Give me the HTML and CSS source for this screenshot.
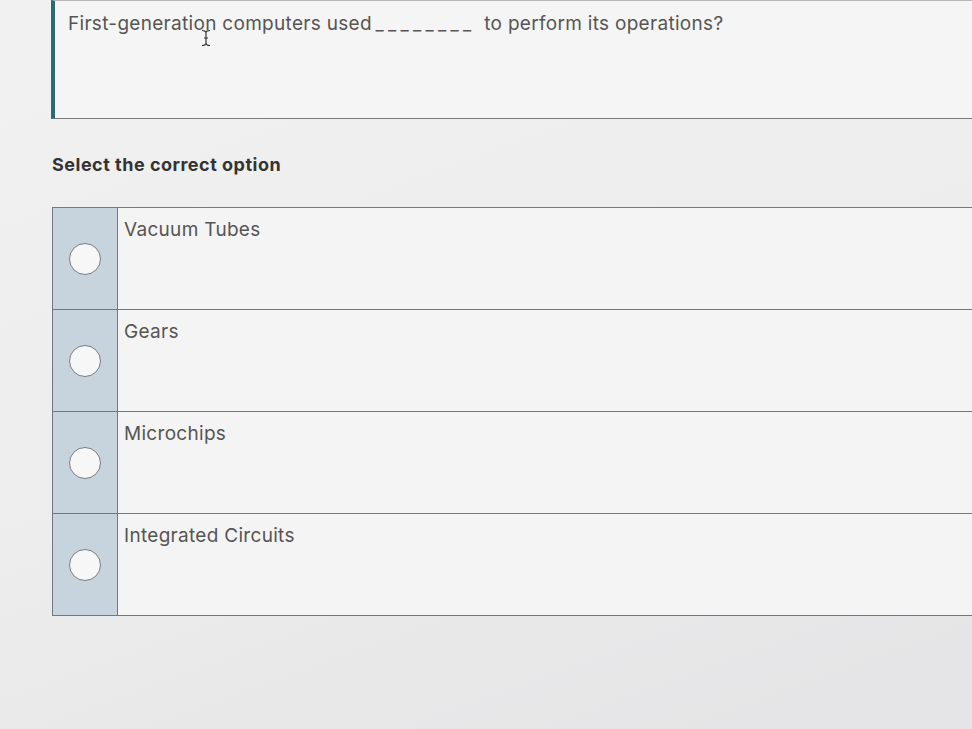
FILE: index.html
```html
<!DOCTYPE html>
<html>
<head>
<meta charset="utf-8">
<link rel="stylesheet" href="styles.css">
</head>
<body>
<div class="page">
  <div class="question">
    <p class="qtext">First-generation computers used <span class="blank">________</span> to perform its operations?</p>
    <svg class="cursor" width="10" height="18" viewBox="0 0 10 18"><path d="M1 1.5 Q5 1.5 5 4 Q5 1.5 9 1.5 M5 4 V14 M1 16.5 Q5 16.5 5 14 Q5 16.5 9 16.5 M3 9 H7" fill="none" stroke="#333" stroke-width="1.2"/></svg>
  </div>
  <h2 class="prompt">Select the correct option</h2>
  <div class="options">
    <div class="option">
      <div class="radio-cell"><span class="radio"></span></div>
      <div class="label">Vacuum Tubes</div>
    </div>
    <div class="option">
      <div class="radio-cell"><span class="radio"></span></div>
      <div class="label">Gears</div>
    </div>
    <div class="option">
      <div class="radio-cell"><span class="radio"></span></div>
      <div class="label">Microchips</div>
    </div>
    <div class="option">
      <div class="radio-cell"><span class="radio"></span></div>
      <div class="label">Integrated Circuits</div>
    </div>
  </div>
</div>
</body>
</html>
```
FILE: styles.css
```css
html, body {
  margin: 0;
  padding: 0;
}
body {
  width: 972px;
  height: 729px;
  overflow: hidden;
  background: linear-gradient(160deg, #f2f1f1 0%, #eeeded 50%, #e4e3e5 100%);
  font-family: Inter, "Noto Sans", sans-serif;
  color: #5a5a5a;
}
.page {
  padding-left: 51px;
}
.question {
  position: relative;
  height: 119px;
  border-left: 4px solid #2c6a78;
  border-top: 1px solid #b9b9b9;
  border-bottom: 1px solid #7a7a7a;
  background: #f6f5f5;
  box-sizing: border-box;
}
.qtext {
  margin: 0;
  padding: 10px 0 0 13px;
  font-size: 19px;
  line-height: 26px;
  letter-spacing: 0.3px;
  color: #555;
}
.blank {
  font-size: 18px;
  letter-spacing: 4.3px;
  margin-left: -2px;
  margin-right: 3px;
}
.cursor {
  position: absolute;
  left: 146px;
  top: 28px;
}
.prompt {
  margin: 33px 0 0 1px;
  font-size: 18px;
  line-height: 26px;
  font-weight: 700;
  color: #333;
  letter-spacing: 0.5px;
}
.options {
  margin-top: 29px;
  border-top: 1px solid #6f7a80;
  margin-left: 1px;
}
.option {
  display: flex;
  height: 102px;
  border-bottom: 1px solid #6f7a80;
  box-sizing: border-box;
  background: #f5f4f4;
}
.radio-cell {
  width: 66px;
  flex: none;
  display: flex;
  align-items: center;
  justify-content: center;
  background: #c7d4dd;
  border-left: 1px solid #6f7a80;
  border-right: 1px solid #6f7a80;
  box-sizing: border-box;
}
.radio {
  width: 32px;
  height: 32px;
  border-radius: 50%;
  border: 1.5px solid #767c81;
  background: #f7f7f7;
  box-sizing: border-box;
}
.label {
  padding: 10px 0 0 6px;
  font-size: 19px;
  line-height: 24px;
  color: #555;
  letter-spacing: 0.3px;
}
```
